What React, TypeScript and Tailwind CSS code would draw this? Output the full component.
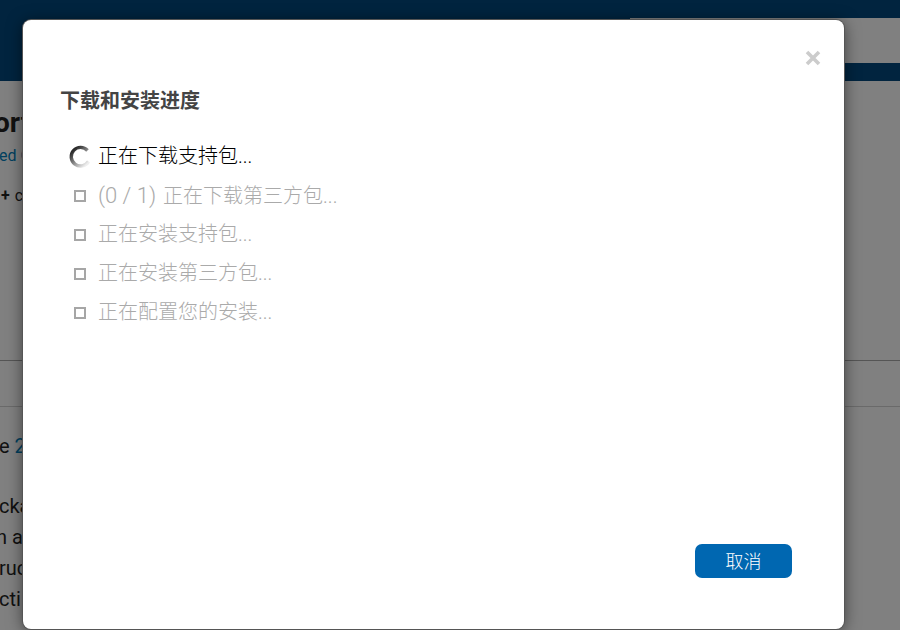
const SANS = 'font-["Roboto","Noto_Sans_CJK_SC",sans-serif]';

const STEPS = [
  { count: '(0 / 1)', label: '正在下载第三方包...' },
  { count: '', label: '正在安装支持包...' },
  { count: '', label: '正在安装第三方包...' },
  { count: '', label: '正在配置您的安装...' },
];

function Spinner() {
  return (
    <svg width="24" height="24" viewBox="0 0 24 24" className="shrink-0">
      <defs>
        <linearGradient id="spin" x1="0.2" y1="0.1" x2="0.9" y2="0.9">
          <stop offset="0" stopColor="#2a2a2a" />
          <stop offset="0.5" stopColor="#8a8a8a" />
          <stop offset="1" stopColor="#eee" />
        </linearGradient>
      </defs>
      <path d="M19.5 5.5A9.3 9.3 0 1 0 20.5 16.5" fill="none" stroke="url(#spin)" strokeWidth="3.4" />
    </svg>
  );
}

function Backdrop() {
  return (
    <div className="h-[630px] w-[900px] overflow-hidden bg-[#808080] text-[#111]">
      <div className="flex h-[81px] bg-[#01243f]">
        <div className="flex-1" />
        <div className="flex w-[270px] flex-col">
          <div className="h-[18px]" />
          <div className="h-[45px] bg-[#808080]" />
        </div>
      </div>
      <div className="h-[279px] pt-[26px]">
        <div className="h-[32px] -ml-[6px] text-[28px] leading-[32px] font-bold">ort</div>
        <div className="mt-[5px] -ml-[1px] text-[16px] leading-[24px] text-[#01405f]">ed C</div>
        <div className="mt-[16px] ml-[1px] text-[16px] leading-[24px]"><span className="font-bold">+</span> <span className="ml-[1px]">c</span></div>
      </div>
      <div className="h-[47px] border-t border-b border-t-[#555] border-b-[#6a6a6a]" />
      <div className="pt-[25px] text-[20px]">
        <div className="-ml-[1px] leading-[28px]">e <span className="text-[#01405f]">2</span></div>
        <div className="mt-[31px] -ml-[1px] leading-[31px]">cka</div>
        <div className="-ml-[4px] leading-[31px]">n a</div>
        <div className="-ml-[1px] leading-[31px]">ruc</div>
        <div className="-ml-[1px] leading-[31px]">cti</div>
      </div>
    </div>
  );
}

export default function App() {
  return (
    <div className={`relative h-[630px] w-[900px] overflow-hidden ${SANS}`}>
      <Backdrop />
      <div className="absolute top-[20px] left-[23px] flex h-[609px] w-[821px] flex-col rounded-[8px] bg-white pt-[68px] pr-[52px] pb-[51px] pl-[37px] shadow-[0_0_0_1px_#555,0_2px_16px_rgba(0,0,0,0.55)]">
        <button className="absolute top-[30px] right-[23px] text-[#ccc]">
          <svg width="16" height="16" viewBox="0 0 16 16" className="block">
            <path d="M2 2L14 14M14 2L2 14" stroke="currentColor" strokeWidth="3.6" />
          </svg>
        </button>
        <h2 className="text-[20px] leading-[26px] font-bold text-[#444]">下载和安装进度</h2>
        <div className="mt-[23px] flex flex-1 flex-col text-[20px] leading-[39px] font-light">
          <div className="flex h-[39px] items-center gap-[6px] pl-[8px] text-black">
            <Spinner />
            <span>正在下载支持包...</span>
          </div>
          {STEPS.map((s) => (
            <div key={s.label} className="flex h-[39px] items-center gap-[12px] pl-[14px] text-[#aaa]">
              <span className="box-border h-[12px] w-[12px] shrink-0 border-[2.5px] border-[#a6a6a6]" />
              <span>
                {s.count && <span className="mr-[7px] text-[22px]">{s.count}</span>}
                {s.label}
              </span>
            </div>
          ))}
        </div>
        <div className="flex justify-end">
          <button className="h-[34px] w-[97px] rounded-[7px] bg-[#0067b1] text-[18px] font-light text-white">取消</button>
        </div>
      </div>
    </div>
  );
}
